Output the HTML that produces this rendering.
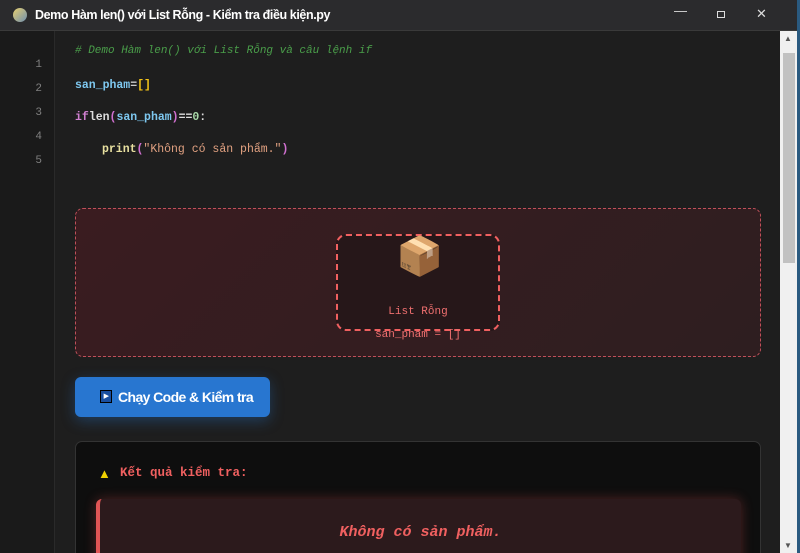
<!DOCTYPE html>
<html><head><meta charset="utf-8"><style>
*{margin:0;padding:0;box-sizing:border-box}
html,body{width:800px;height:553px;overflow:hidden}
body{background:#1e1e1e;font-family:"Liberation Sans","DejaVu Sans",sans-serif;position:relative}
.tb{position:absolute;left:0;top:0;width:800px;height:31px;background:#2b2b2d;border-bottom:1px solid #3a3a3a}
.tb .ic{position:absolute;left:13px;top:8px;width:14px;height:14px;border-radius:50%;background:linear-gradient(135deg,#e8d070,#6f8fb0)}
.tb .t{position:absolute;left:35px;top:8px;color:#fff;font-size:12.5px;font-weight:bold;letter-spacing:-0.4px}
.tb .b{position:absolute;top:6px;color:#ddd;font-size:13px}
.gut{position:absolute;left:0;top:31px;width:55px;height:522px;background:#1a1a1a;border-right:1px solid #2a2a2a}
.ln{position:absolute;left:20px;width:22px;text-align:right;color:#808080;font:11px "Liberation Mono",monospace}
.code{position:absolute;left:75px;font:bold 11.5px "Liberation Mono",monospace;color:#ddd}
.mono{font-family:"Liberation Mono",monospace}
.sb{position:absolute;left:780px;top:31px;width:17px;height:522px;background:#f0f0f0}
.th{position:absolute;left:783px;top:53px;width:12px;height:210px;background:#c1c1c1}
.edge{position:absolute;left:797px;top:0;width:3px;height:553px;background:#2a5a80}
.box{position:absolute;left:75px;top:208px;width:686px;height:149px;border:1px dashed #c0505a;border-radius:8px;background:linear-gradient(135deg,#3a1c20,#2e1e20)}
.inner{position:absolute;left:336px;top:234px;width:164px;height:97px;border:2px dashed #f06060;border-radius:10px;background:#261719}
.btn{position:absolute;left:75px;top:377px;width:195px;height:40px;background:#2876d0;border-radius:6px;box-shadow:0 4px 14px rgba(40,120,210,.35);color:#fff;font-size:14px;font-weight:bold;letter-spacing:-0.6px}
.res{position:absolute;left:75px;top:441px;width:686px;height:130px;border:1px solid #333;border-radius:7px;background:#0e0e0e}
.msg{position:absolute;left:96px;top:499px;width:645px;height:70px;border-left:4px solid #e05555;border-radius:6px;background:#2c1a1c;box-shadow:0 0 12px rgba(230,80,80,.3)}
</style></head><body>
<div class="tb"><div class="ic"></div><div class="t">Demo Hàm len() với List Rỗng - Kiểm tra điều kiện.py</div>
<div class="b" style="left:674px;top:3px">—</div><div style="position:absolute;left:717px;top:11px;width:8px;height:7px;border:1.5px solid #ddd"></div><div class="b" style="left:756px">✕</div></div>
<div class="gut"></div>
<div class="ln" style="top:59px">1</div><div class="ln" style="top:83px">2</div><div class="ln" style="top:107px">3</div><div class="ln" style="top:131px">4</div><div class="ln" style="top:155px">5</div>
<div class="code" style="top:45px;color:#4a9e4a;font-style:italic;font-weight:normal;font-size:11px">#&nbsp;Demo Hàm len() với List Rỗng và câu lệnh if</div>
<div class="code" style="top:79px"><span style="color:#7ec8f0">san_pham</span><span style="color:#ccc">=</span><span style="color:#f5c518">[]</span></div>
<div class="code" style="top:111px"><span style="color:#d080d0">if</span><span style="color:#ddd">len</span><span style="color:#d070d0">(</span><span style="color:#7ec8f0">san_pham</span><span style="color:#d070d0">)</span>==<span style="color:#a8d8a8">0</span>:</div>
<div class="code" style="top:143px;left:102px"><span style="color:#e8e0a0">print</span><span style="color:#d070d0">(</span><span style="color:#e0a080;font-weight:normal">"Không có sản phẩm."</span><span style="color:#d070d0">)</span></div>
<div class="box"></div>
<div class="inner"></div>
<div style="position:absolute;left:396px;top:234px;width:46px;height:46px;font-size:38px;line-height:46px">📦</div>
<div class="mono" style="position:absolute;left:336px;top:306px;width:164px;text-align:center;color:#f07070;font-size:11px">List Rỗng</div>
<div class="mono" style="position:absolute;left:336px;top:329px;width:164px;text-align:center;color:#f07070;font-size:11px">san_pham = []</div>
<div class="btn"><span style="position:absolute;left:25px;top:13px;width:12px;height:13px;background:#1a4fa0;border:1px solid #000;color:#fff;font-size:7px;text-align:center;line-height:11px">▶</span><span style="position:absolute;left:43px;top:12px">Chạy Code &amp; Kiểm tra</span></div>
<div class="res"></div>
<div style="position:absolute;left:98px;top:466px;color:#f0d000;font-size:13px">▲</div>
<div class="mono" style="position:absolute;left:120px;top:466px;color:#f06060;font-weight:bold;font-size:12.5px">Kết quả kiểm tra:</div>
<div class="msg"></div>
<div class="mono" style="position:absolute;left:100px;top:524px;width:641px;text-align:center;color:#f06060;font-style:italic;font-weight:bold;font-size:15px">Không có sản phẩm.</div>
<div class="sb"></div><div class="th"></div>
<div style="position:absolute;left:784px;top:34px;color:#555;font-size:8px">▲</div>
<div style="position:absolute;left:784px;top:541px;color:#555;font-size:8px">▼</div>
<div class="edge"></div>
</body></html>
